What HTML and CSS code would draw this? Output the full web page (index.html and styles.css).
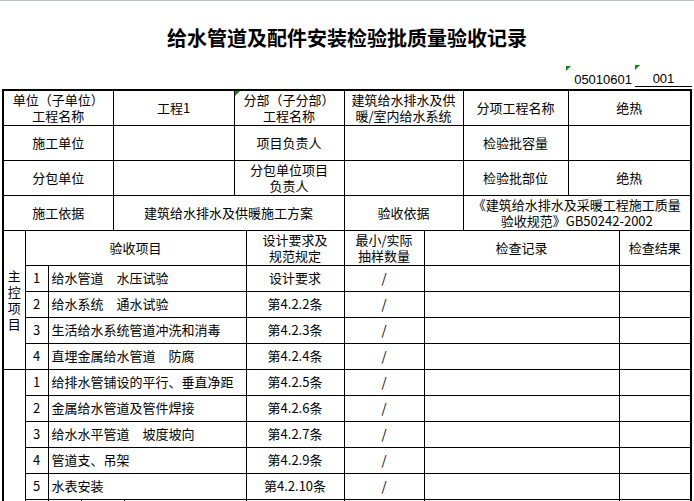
FILE: index.html
```html
<!DOCTYPE html>
<html lang="zh">
<head>
<meta charset="utf-8">
<title>给水管道及配件安装检验批质量验收记录</title>
<link rel="stylesheet" href="styles.css">
</head>
<body>
<div class="topline"></div>
<div class="header">
  <div class="title">给水管道及配件安装检验批质量验收记录</div>
  <div class="code">
    <span class="num mark">05010601</span>
    <span class="seq mark">001</span>
  </div>
</div>
<table class="sheet">
  <colgroup>
    <col class="c1"><col class="c2"><col class="c3"><col class="c4"><col class="c5"><col class="c6"><col class="c7"><col class="c8"><col class="c9"><col class="c10"><col class="c11"><col class="c12"><col class="c13">
  </colgroup>
  <tr class="tall">
    <td colspan="4">单位（子单位）<br>工程名称</td>
    <td colspan="2">工程1</td>
    <td colspan="2" class="mark-cell">分部（子分部）<br>工程名称</td>
    <td colspan="2">建筑给水排水及供<br>暖/室内给水系统</td>
    <td>分项工程名称</td>
    <td colspan="2">绝热</td>
  </tr>
  <tr class="tall">
    <td colspan="4">施工单位</td>
    <td colspan="2"></td>
    <td colspan="2">项目负责人</td>
    <td colspan="2"></td>
    <td>检验批容量</td>
    <td colspan="2"></td>
  </tr>
  <tr class="tall">
    <td colspan="4">分包单位</td>
    <td colspan="2"></td>
    <td colspan="2">分包单位项目<br>负责人</td>
    <td colspan="2"></td>
    <td>检验批部位</td>
    <td colspan="2">绝热</td>
  </tr>
  <tr class="tall">
    <td colspan="4">施工依据</td>
    <td colspan="4">建筑给水排水及供暖施工方案</td>
    <td colspan="2">验收依据</td>
    <td colspan="3">《建筑给水排水及采暖工程施工质量<br>验收规范》GB50242-2002</td>
  </tr>
  <tr class="tall">
    <td rowspan="5" class="group"><div class="vert">主控项目</div></td>
    <td colspan="6">验收项目</td>
    <td>设计要求及<br>规范规定</td>
    <td>最小/实际<br>抽样数量</td>
    <td colspan="3">检查记录</td>
    <td>检查结果</td>
  </tr>
  <tr class="item">
    <td>1</td>
    <td colspan="5" class="name">给水管道&emsp;水压试验</td>
    <td>设计要求</td>
    <td>/</td>
    <td colspan="3"></td>
    <td></td>
  </tr>
  <tr class="item">
    <td>2</td>
    <td colspan="5" class="name">给水系统&emsp;通水试验</td>
    <td>第4.2.2条</td>
    <td>/</td>
    <td colspan="3"></td>
    <td></td>
  </tr>
  <tr class="item">
    <td>3</td>
    <td colspan="5" class="name">生活给水系统管道冲洗和消毒</td>
    <td>第4.2.3条</td>
    <td>/</td>
    <td colspan="3"></td>
    <td></td>
  </tr>
  <tr class="item">
    <td>4</td>
    <td colspan="5" class="name">直埋金属给水管道&emsp;防腐</td>
    <td>第4.2.4条</td>
    <td>/</td>
    <td colspan="3"></td>
    <td></td>
  </tr>
  <tr class="item">
    <td rowspan="6" class="group"></td>
    <td>1</td>
    <td colspan="5" class="name">给排水管铺设的平行、垂直净距</td>
    <td>第4.2.5条</td>
    <td>/</td>
    <td colspan="3"></td>
    <td></td>
  </tr>
  <tr class="item">
    <td>2</td>
    <td colspan="5" class="name">金属给水管道及管件焊接</td>
    <td>第4.2.6条</td>
    <td>/</td>
    <td colspan="3"></td>
    <td></td>
  </tr>
  <tr class="item">
    <td>3</td>
    <td colspan="5" class="name">给水水平管道&emsp;坡度坡向</td>
    <td>第4.2.7条</td>
    <td>/</td>
    <td colspan="3"></td>
    <td></td>
  </tr>
  <tr class="item">
    <td>4</td>
    <td colspan="5" class="name">管道支、吊架</td>
    <td>第4.2.9条</td>
    <td>/</td>
    <td colspan="3"></td>
    <td></td>
  </tr>
  <tr class="item">
    <td>5</td>
    <td colspan="5" class="name">水表安装</td>
    <td>第4.2.10条</td>
    <td>/</td>
    <td colspan="3"></td>
    <td></td>
  </tr>
  <tr class="item">
    <td></td>
    <td></td>
    <td colspan="2"></td>
    <td colspan="2"></td>
    <td></td>
    <td></td>
    <td colspan="3"></td>
    <td></td>
  </tr>
</table>
</body>
</html>
```
FILE: styles.css
```css
html, body {
  margin: 0;
  padding: 0;
  background: #ffffff;
}

body {
  font-family: "Noto Sans CJK SC", "Noto Sans", sans-serif;
  font-size: 13px;
  color: #000000;
}

.topline {
  height: 1px;
  background: #b6bfce;
}

.header {
  height: 88px;
  display: flex;
  flex-direction: column;
}

.title {
  margin-top: 25px;
  font-size: 20px;
  font-weight: bold;
  line-height: 24px;
  text-align: center;
}

.code {
  margin-top: auto;
  margin-bottom: 2px;
  display: flex;
  justify-content: flex-end;
  align-items: flex-end;
  padding-right: 2px;
  font-family: "Liberation Sans", "Noto Sans CJK SC", sans-serif;
  font-size: 13px;
  line-height: 15px;
}

.num {
  margin-right: 3px;
}

.seq {
  width: 57px;
  text-align: center;
  border-bottom: 1px solid #000000;
}

.mark {
  position: relative;
}

.num.mark::before,
.seq.mark::before,
.mark-cell::before {
  content: "";
  position: absolute;
  width: 0;
  height: 0;
  border-top: 5px solid #0a8a0a;
  border-right: 5px solid transparent;
}

.num.mark::before {
  left: -8px;
  top: -6px;
}

.seq.mark::before {
  left: 0;
  top: -6px;
}

.sheet {
  margin-left: 2px;
  width: 690px;
  table-layout: fixed;
  border-collapse: collapse;
  border: 2px solid #000000;
}

.sheet td {
  border: 1px solid #000000;
  padding: 0 1px;
  text-align: center;
  vertical-align: middle;
  line-height: 16px;
  white-space: nowrap;
  overflow: hidden;
}

.mark-cell {
  position: relative;
}

.mark-cell::before {
  left: 0;
  top: 0;
}

.c1 { width: 22px; }
.c2 { width: 23px; }
.c3 { width: 33px; }
.c4 { width: 32px; }
.c5 { width: 11px; }
.c6 { width: 110px; }
.c7 { width: 12px; }
.c8 { width: 98px; }
.c9 { width: 80px; }
.c10 { width: 39px; }
.c11 { width: 105px; }
.c12 { width: 51px; }
.c13 { width: 72px; }

.tall {
  height: 35px;
}

.item {
  height: 26px;
}

.sheet td.name {
  text-align: left;
  padding-left: 3px;
}

.sheet td.group {
  padding: 0;
}

.vert {
  width: 1em;
  margin: 0 auto;
  line-height: 16px;
  white-space: normal;
  word-break: break-all;
}
```
